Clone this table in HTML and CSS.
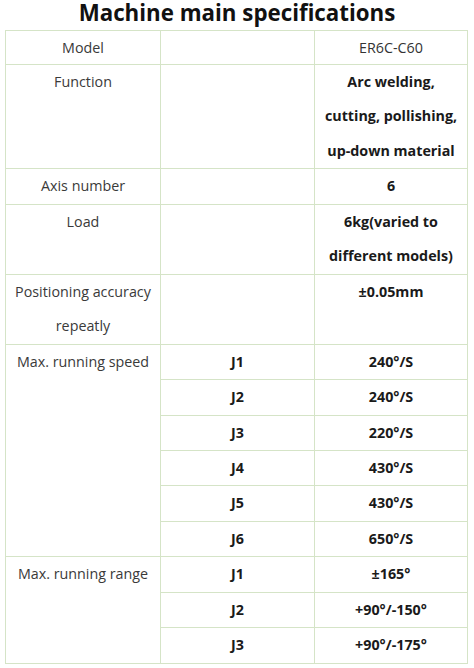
FILE: index.html
```html
<!DOCTYPE html>
<html>
<head>
<meta charset="utf-8">
<link rel="stylesheet" href="styles.css">
</head>
<body>
<div class="page">
  <h1 class="title">Machine main specifications</h1>
  <table class="spec">
    <colgroup>
      <col class="c1"><col class="c2"><col class="c3">
    </colgroup>
    <tr class="first">
      <td class="label">Model</td>
      <td class="mid"></td>
      <td class="val plain">ER6C-C60</td>
    </tr>
    <tr>
      <td class="label">Function</td>
      <td class="mid"></td>
      <td class="val">Arc welding,<br>cutting, pollishing,<br>up-down material</td>
    </tr>
    <tr>
      <td class="label">Axis number</td>
      <td class="mid"></td>
      <td class="val">6</td>
    </tr>
    <tr>
      <td class="label">Load</td>
      <td class="mid"></td>
      <td class="val">6kg(varied to<br>different models)</td>
    </tr>
    <tr>
      <td class="label">Positioning accuracy<br>repeatly</td>
      <td class="mid"></td>
      <td class="val">±0.05mm</td>
    </tr>
    <tr>
      <td class="label" rowspan="6">Max. running speed</td>
      <td class="mid">J1</td>
      <td class="val">240°/S</td>
    </tr>
    <tr><td class="mid">J2</td><td class="val">240°/S</td></tr>
    <tr><td class="mid">J3</td><td class="val">220°/S</td></tr>
    <tr><td class="mid">J4</td><td class="val">430°/S</td></tr>
    <tr><td class="mid">J5</td><td class="val">430°/S</td></tr>
    <tr><td class="mid">J6</td><td class="val">650°/S</td></tr>
    <tr>
      <td class="label" rowspan="3">Max. running range</td>
      <td class="mid">J1</td>
      <td class="val">±165°</td>
    </tr>
    <tr><td class="mid">J2</td><td class="val">+90°/-150°</td></tr>
    <tr><td class="mid">J3</td><td class="val">+90°/-175°</td></tr>
  </table>
</div>
</body>
</html>
```
FILE: styles.css
```css
html, body {
  margin: 0;
  padding: 0;
  background: #ffffff;
}
body {
  width: 474px;
  height: 668px;
  overflow: hidden;
  font-family: "Open Sans", "Noto Sans", "DejaVu Sans", sans-serif;
}
.page {
  padding: 0 8px 0 5px;
}
.title {
  margin: 0 -8px 0 -5px;
  height: 30px;
  line-height: 26px;
  font-size: 22.3px;
  font-weight: 700;
  color: #111111;
  text-align: center;
}
.spec {
  width: 462px;
  border-collapse: collapse;
  table-layout: fixed;
}
.c1 { width: 155px; }
.c2 { width: 154px; }
.c3 { width: 153px; }
.spec td {
  border: 1px solid #d5e4c7;
  padding: 0;
  vertical-align: top;
  text-align: center;
  line-height: 34.45px;
  font-size: 14.3px;
}
.spec tr.first td {
  line-height: 33px;
}
.label {
  color: #3a3a3a;
  font-weight: 400;
}
.mid {
  color: #1a1a1a;
  font-weight: 700;
}
.val {
  color: #1a1a1a;
  font-weight: 700;
}
.val.plain {
  font-weight: 400;
  color: #333333;
}
```
